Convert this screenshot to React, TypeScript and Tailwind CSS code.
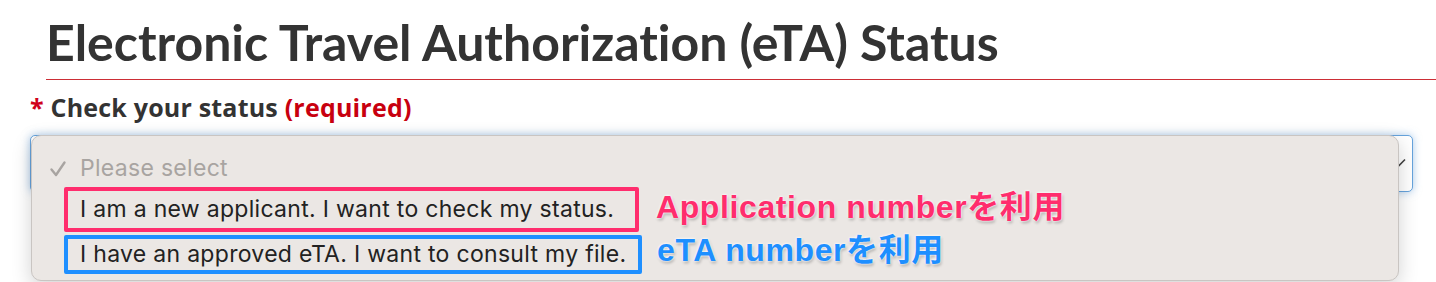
import React from 'react';

const Check = () => (
  <svg viewBox="0 0 18 18" className="h-[18px] w-[18px]" fill="none">
    <path d="M2.5 9.5 L7 15 L15.5 2.5" stroke="#a8a4a1" strokeWidth="2.4" strokeLinecap="round" strokeLinejoin="round" />
  </svg>
);

export default function App() {
  return (
    <div className="min-h-screen overflow-hidden bg-white pl-[30px]">
      {/* Heading */}
      <div className="ml-[16px] pt-[17px]">
        <h1 className="pb-[12px] font-['Lato'] text-[50px] font-bold leading-[50px] text-[#333333] [font-variant-ligatures:none]">
          Electronic Travel Authorization (eTA) Status
        </h1>
        <div className="h-px bg-[#cc2e36]" />
      </div>

      <div className="pr-[23px]">
        {/* Label */}
        <label className="mt-[11px] block font-['Open_Sans'] text-[25px] font-bold leading-[32px] tracking-[0.2px] text-[#333333]">
          <span className="text-[#d0021b]">*</span> Check your status{' '}
          <span className="text-[#c8000f]">(required)</span>
        </label>

        {/* Select with open native menu */}
        <div className="relative mt-[12px] h-[57px] rounded-[5px] border border-[#66a3dc] bg-white shadow-[0_0_8px_rgba(102,163,220,0.55)]">
          <svg viewBox="0 0 16 10" className="absolute right-[6px] top-[22px] h-[10px] w-[16px]" fill="none">
            <path d="M1 1.5 L8 8.5 L15 1.5" stroke="#444" strokeWidth="1.6" />
          </svg>

          <div className="absolute left-[0px] top-[-1px] h-[146px] w-[1368px] rounded-[10px] border border-[#c9c5c2] bg-[#ebe7e4] shadow-[0_6px_20px_rgba(0,0,0,0.18)] font-['Inter'] text-[23px] tracking-[0.3px] text-[#222222]">
            <div className="flex h-[40px] items-center pl-[17px] pt-[25px]">
              <Check />
              <span className="ml-[13px] text-[#a8a4a1]">Please select</span>
            </div>

            <div className="mt-[11px] flex flex-col gap-[2px] pl-[32px]">
              <div className="flex items-center">
                <div className="flex h-[45px] w-[575px] items-center rounded-[2px] border-[4px] border-[#ff2d6d] pl-[12px]">
                  I am a new applicant. I want to check my status.
                </div>
                <span className="ml-[17px] mt-[-6px] font-['Liberation_Sans','Noto_Sans_CJK_JP',sans-serif] text-[32px] font-bold tracking-[0.6px] text-[#ff2d6d] [text-shadow:0_0_2px_#fff,0_0_3px_#fff,1px_2px_3px_rgba(0,0,0,0.3)]">
                  Application numberを利用
                </span>
              </div>
              <div className="flex items-center">
                <div className="flex h-[39px] w-[578px] items-center rounded-[2px] border-[4px] border-[#1e8fff] pl-[12px]">
                  I have an approved eTA. I want to consult my file.
                </div>
                <span className="ml-[15px] mt-[-8px] font-['Liberation_Sans','Noto_Sans_CJK_JP',sans-serif] text-[32px] font-bold tracking-[0.6px] text-[#1e8fff] [text-shadow:0_0_2px_#fff,0_0_3px_#fff,1px_2px_3px_rgba(0,0,0,0.3)]">
                  eTA numberを利用
                </span>
              </div>
            </div>
          </div>
        </div>
      </div>
    </div>
  );
}
